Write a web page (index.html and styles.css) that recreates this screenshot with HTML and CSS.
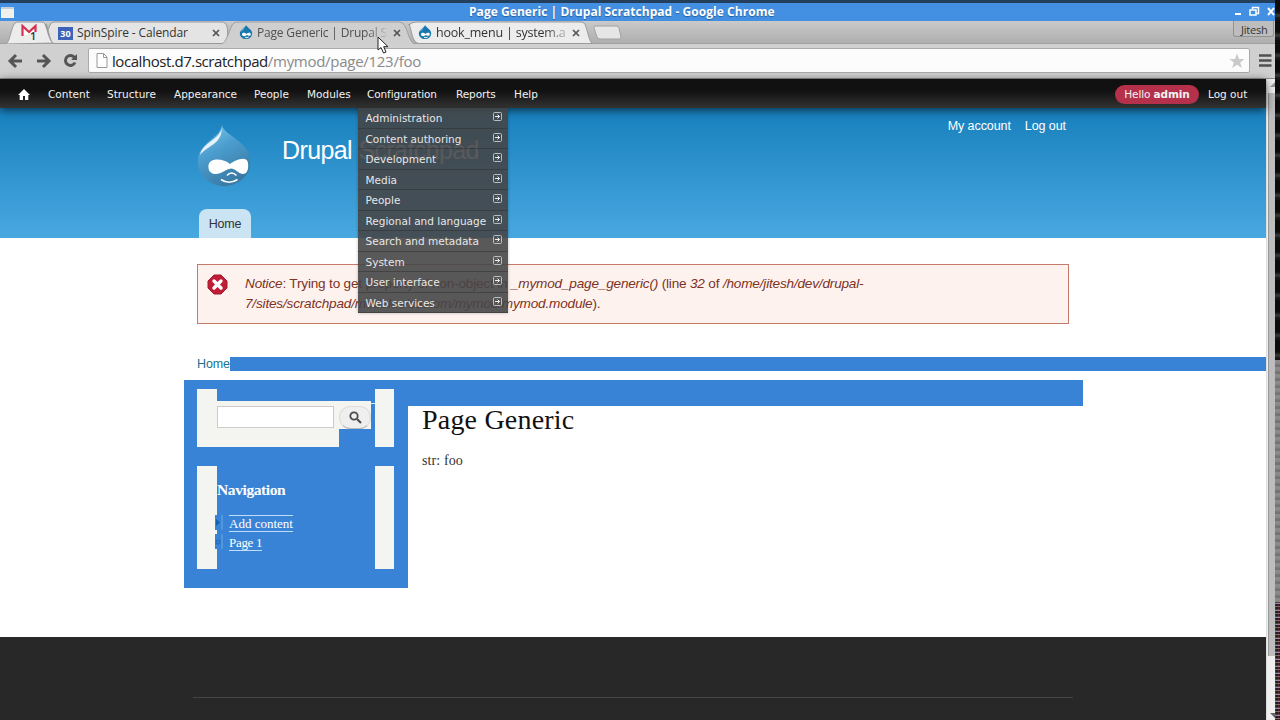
FILE: index.html
```
<!DOCTYPE html>
<html lang="en">
<head>
  <meta charset="UTF-8">
  <title>Page Generic | Drupal Scratchpad</title>
  <link rel="stylesheet" href="styles.css">
</head>
<body>
  <svg class="defs" width="0" height="0">
    <defs>
      <symbol id="drop" viewBox="0 0 14 14">
        <path d="M7 0C7.4 2.2 13.2 4 13.2 8.6A6 5.4 0 0 1 .8 8.6C.8 4.800 6 3.200 7 0Z" fill="#1878ad"/>
        <path d="M5.500 3C3.500 4 2 5.500 2 7C3.500 5 5 5 5.500 3Z" fill="#75bce0"/>
        <path d="M3 9.300C3.300 7.300 6 7.500 7.500 8.900C9 7.500 11.700 7.400 11.800 9.200C11.900 11 9.500 11.400 8 10.100C6.300 11.600 2.900 11.700 3 9.300Z" fill="#fff"/>
        <path d="M6 12.200Q7.800 13.400 9.600 12" stroke="#fff" fill="none"/>
      </symbol>
      <symbol id="more" viewBox="0 0 9 9">
        <rect x=".5" y=".5" width="8" height="8" rx="1" fill="none" stroke="#b9bec3"/>
        <path d="M2 4.500H6.500M4.500 2.500L6.500 4.500L4.500 6.500" fill="none" stroke="#eee"/>
      </symbol>
      <symbol id="close" viewBox="0 0 8 8">
        <path d="M1 1L7 7M7 1L1 7" stroke="#555" stroke-width="1.700"/>
      </symbol>
    </defs>
  </svg>

  <div class="desktop">
    <div class="window">
      <div class="titlebar">
        <span class="win-icon"></span>
        <span class="win-title">Page Generic | Drupal Scratchpad - Google Chrome</span>
        <svg class="win-buttons" width="41" height="18" viewBox="0 0 41 18">
          <path d="M1 11H7" stroke="#fff" stroke-width="2"/>
          <path d="M18.500 6V4.500H24.500V10.500H22" stroke="#fff" fill="none" stroke-width="1.500"/>
          <rect x="16" y="7" width="6" height="5" stroke="#fff" fill="none" stroke-width="1.500"/>
          <path d="M34 5L40 12M40 5L34 12" stroke="#fff" stroke-width="2"/>
        </svg>
      </div>

      <div class="tabstrip">
        <svg class="tab-shapes" width="640" height="23" viewBox="0 0 640 23">
          <path d="M6 23C10 21 11 6 15 2Q16 1 19 1H41Q44 1 45 3C48 10 49 21 54 22Z" fill="#ececec" stroke="#999"/>
          <path d="M46 3C49 10 50 22 54 22.500H225C228 20 229 5 225 2Q224 1 221 1H54Q51 1 50 4L48 9Z" fill="#e4e4e4" stroke="#999"/>
          <path d="M409 3C412 10 412 22 419 22.500H592C588 18 587 5 584 2Q583 1 580 1H416Q412 1 409 4Z" fill="#ececec" stroke="#999"/>
          <path d="M220 24C228 22 229 6 234 2Q235 1 238 1H399Q403 1 405 5C409 14 410 22 416 24Z" fill="#cfcfcf" stroke="#a0a0a0"/>
          <path d="M596 5H617Q618 5 619 7L621 16Q621 18 619 18H600Q598 18 597 16L594 7Q593 5 596 5Z" fill="#e6e6e6" stroke="#a2a2a2"/>
        </svg>
        <div class="tab tab-mail">
          <svg width="17" height="16" viewBox="0 0 17 16">
            <path d="M1.500 12V2L8 8L14.500 2V8" fill="#fff" stroke="#d5304f" stroke-width="2.200"/>
          </svg>
          <span class="unread">1</span>
        </div>
        <div class="tab tab-calendar">
          <span class="cal-icon">30</span>
          <span class="tab-label">SpinSpire - Calendar</span>
          <svg width="8" height="8"><use href="#close"/></svg>
        </div>
        <div class="tab tab-page">
          <svg width="14" height="14"><use href="#drop"/></svg>
          <span class="tab-label">Page Generic | Drupal S</span>
          <svg width="8" height="8"><use href="#close"/></svg>
        </div>
        <div class="tab tab-hook">
          <svg width="14" height="14"><use href="#drop"/></svg>
          <span class="tab-label">hook_menu | system.ap</span>
          <svg width="8" height="8"><use href="#close"/></svg>
        </div>
        <span class="profile">Jitesh</span>
      </div>

      <div class="toolbar">
        <svg width="84" height="20" viewBox="0 0 84 20" fill="none" stroke="#555" stroke-width="3">
          <path d="M22 10H11M16 4L10 10L16 16"/>
          <path d="M37 10H48M43 4L49 10L43 16"/>
          <path d="M74.500 6.500A5 5 0 1 0 75 11.500"/>
          <path d="M77 3V9H71Z" fill="#555" stroke="none"/>
        </svg>
        <div class="omnibox">
          <svg width="12" height="15" viewBox="0 0 12 15">
            <path d="M1 .5H7.500L11 4V14.500H1ZM7.500 .5V4.500H11" fill="#fff" stroke="#999"/>
          </svg>
          <span class="url">localhost.d7.scratchpad<span class="path">/mymod/page/123/foo</span></span>
          <svg width="16" height="16" viewBox="0 0 16 16">
            <path d="M8 .5L10 6H15.500L11.200 9.400L12.800 15L8 11.700L3.200 15L4.800 9.400L.5 6H6Z" fill="#c9c9c9"/>
          </svg>
        </div>
        <svg class="menu-icon" width="13" height="13" viewBox="0 0 13 13">
          <path d="M0 1.500H12.500M0 6.500H12.500M0 11.500H12.500" stroke="#505050" stroke-width="2.400"/>
        </svg>
      </div>

      <div class="viewport">
        <div class="page">
          <div class="admin-menu">
            <svg width="12" height="11" viewBox="0 0 12 11">
              <path d="M6 0L12 6H10.300V11H7V7H5V11H1.700V6H0Z" fill="#fff"/>
            </svg>
            <span class="am-content">Content</span>
            <span class="am-structure">Structure</span>
            <span class="am-appearance">Appearance</span>
            <span class="am-people">People</span>
            <span class="am-modules">Modules</span>
            <div class="am-config">Configuration
              <ul class="dropdown">
                <li>Administration<svg width="9" height="9"><use href="#more"/></svg></li>
                <li>Content authoring<svg width="9" height="9"><use href="#more"/></svg></li>
                <li>Development<svg width="9" height="9"><use href="#more"/></svg></li>
                <li>Media<svg width="9" height="9"><use href="#more"/></svg></li>
                <li>People<svg width="9" height="9"><use href="#more"/></svg></li>
                <li>Regional and language<svg width="9" height="9"><use href="#more"/></svg></li>
                <li>Search and metadata<svg width="9" height="9"><use href="#more"/></svg></li>
                <li>System<svg width="9" height="9"><use href="#more"/></svg></li>
                <li>User interface<svg width="9" height="9"><use href="#more"/></svg></li>
                <li>Web services<svg width="9" height="9"><use href="#more"/></svg></li>
              </ul>
            </div>
            <span class="am-reports">Reports</span>
            <span>Help</span>
            <span class="hello">Hello <b>admin</b></span>
            <span class="am-logout">Log out</span>
          </div>

          <div class="header">
            <div class="branding">
              <svg class="logo" width="55" height="62" viewBox="0 0 55 62">
                <defs>
                  <linearGradient id="body" x1="0" y1="0" x2="0.500" y2="1">
                    <stop offset="0" stop-color="#8fcdec"/>
                    <stop offset=".45" stop-color="#4c9fd0"/>
                    <stop offset="1" stop-color="#3a7ba6"/>
                  </linearGradient>
                </defs>
                <path d="M25 0C27 11 53.500 16 53.500 37A26.200 24 0 0 1 .8 37C.8 17 23 14 25 0Z" fill="url(#body)"/>
                <path d="M25 3C22 15 6 17 3 30C11 20 24 20 25 3Z" fill="#fff" opacity=".85"/>
                <path d="M11.500 43C10 32 26 33 33 39C38 35 50 30 51 38C52 46 49 49 46 49C42 49 38 43.500 34 43.500C29 44 24 49 19 49C15 49 12 47 11.500 43Z" fill="#fff"/>
                <path d="M30 50.500Q34.500 45.500 39.500 50.500M24 54.500Q32 60 40.500 54.500" fill="none" stroke="#fff" stroke-width="1.600"/>
              </svg>
              <h1>Drupal Scratchpad</h1>
              <div class="user-links"><span>My account</span><span>Log out</span></div>
            </div>
            <div class="main-tab">Home</div>
          </div>

          <div class="message">
            <svg width="22" height="22" viewBox="0 0 22 22">
              <path d="M7 1H14L20 7V14L14 20H7L1 14V7Z" fill="#c01e37" stroke="#a51a30"/>
              <path d="M7 7L14 14M14 7L7 14" stroke="#fff" stroke-width="3.400" stroke-linecap="round"/>
            </svg>
            <p><em>Notice</em>: Trying to get property of non-object in <em>_mymod_page_generic()</em> (line <em>32</em> of <em>/home/jitesh/dev/drupal-<br>7/sites/scratchpad/modules/custom/mymod/mymod.module</em>).</p>
          </div>

          <div class="breadcrumb"><span>Home</span><div class="fill"></div></div>

          <div class="main">
            <div class="sidebar">
              <div class="block search">
                <div class="search-body">
                  <div class="search-form">
                    <div class="input"></div>
                    <div class="search-button">
                      <svg width="13" height="13" viewBox="0 0 13 13" fill="none" stroke="#4c4c4c">
                        <circle cx="5" cy="5" r="3.700" stroke-width="1.800"/>
                        <path d="M8 8L12 12" stroke-width="2.200"/>
                      </svg>
                    </div>
                  </div>
                  <div class="search-foot"></div>
                </div>
                <div class="search-gap"></div>
              </div>
              <div class="block nav">
                <h2>Navigation</h2>
                <ul>
                  <li class="add"><svg width="8" height="15" viewBox="0 0 8 15"><path d="M0 0H6V15H0Z" fill="#3983d6"/><path d="M1 4L5 7.500L1 11Z" fill="#1262ad"/><path d="M7 0V15" stroke="#6ba9ea"/></svg><a>Add content</a></li>
                  <li><svg width="8" height="15" viewBox="0 0 8 15"><path d="M0 0H6V15H0Z" fill="#3983d6"/><circle cx="3" cy="8" r="2" fill="none" stroke="#1b68b8"/><path d="M7 0V15" stroke="#6ba9ea"/></svg><a>Page 1</a></li>
                </ul>
              </div>
            </div>
            <div class="content">
              <div class="content-top"></div>
              <h2>Page Generic</h2>
              <p>str: foo</p>
            </div>
          </div>

          <div class="footer"><div class="rule"></div></div>
        </div>

        <div class="scrollbar">
          <svg width="9" height="10" viewBox="0 0 9 10"><path d="M3 8L8 3V8Z" fill="#999"/></svg>
          <div class="thumb"></div>
          <svg width="9" height="10" viewBox="0 0 9 10"><path d="M3 3L8 8V3Z" fill="#666"/></svg>
        </div>
      </div>
    </div>
    <div class="screen-edge">
      <div class="edge-dark"></div>
      <div class="edge-gray"></div>
      <div class="edge-noise"></div>
    </div>
    <svg class="cursor" width="12" height="19" viewBox="0 0 12 19">
      <path d="M1 1V14L4 11.500L6.500 17L9 16L6.700 10.700H11Z" fill="#fff" stroke="#222"/>
    </svg>
  </div>
</body>
</html>
```
FILE: styles.css
```
* { box-sizing: border-box; margin: 0; padding: 0; }
body {
  width: 1280px; height: 720px; overflow: hidden;
  font-family: "Liberation Sans", Arial, sans-serif;
  background: #fff;
}
svg { display: block; flex: none; }
ul { list-style: none; }
.defs { display: none; }
.desktop { position: relative; display: flex; height: 720px; }
.window { width: 1275px; display: flex; flex-direction: column; border-top: 3px solid #243f5c; }

/* window title and tabs */
.titlebar {
  height: 18px; display: flex; align-items: center;
  background: #438fe1; color: #fff; font: bold 12px/18px "Open Sans", "Noto Sans", sans-serif;
}
.win-icon { width: 13px; height: 11px; margin: 1px 0 0 1px; background: #f2f0ea; border-top: 2px solid #c5d0d8; }
.win-title { margin-left: 455px; letter-spacing: .05px; text-shadow: 0 1px 1px #26609f; white-space: nowrap; }
.win-buttons { margin-left: auto; }
.tabstrip {
  position: relative; height: 23px; display: flex; align-items: center;
  background: linear-gradient(#cacaca, #aeaeae); border-bottom: 1px solid #a0a0a0;
  font: 12px/22px "Open Sans", "Noto Sans", sans-serif; color: #333;
}
.tab-shapes { position: absolute; left: 0; top: 0; }
.tab { position: relative; height: 22px; display: flex; align-items: center; }
.tab-label { white-space: nowrap; padding-top: 1px; }
.tab svg + .tab-label + svg, .tab-calendar svg { margin-top: 1px; }
.tab-mail { width: 58px; padding-left: 21px; }
.unread { margin: 7px 0 0 -8px; font-size: 11px; font-weight: 600; }
.tab-calendar { width: 181px; }
.tab-calendar .tab-label { width: 135px; letter-spacing: -.12px; }
.cal-icon { width: 15px; height: 13px; margin: 2px 4px 0 0; background: #3d62b8; color: #fff; font-size: 9px; font-weight: bold; line-height: 13px; text-align: center; }
.tab-page { width: 179px; }
.tab-page .tab-label { width: 129px; margin: 0 7px 0 4px; letter-spacing: -.18px; color: #505050; -webkit-mask: linear-gradient(90deg, #000 110px, transparent 132px); }
.tab-hook .tab-label { width: 130px; margin: 0 6px 0 4px; font-size: 12.500px; letter-spacing: -.2px; -webkit-mask: linear-gradient(90deg, #000 108px, transparent 138px); }
.profile {
  width: 41px; height: 16px; margin: -6px 1px 0 auto; padding-left: 7px;
  border: 1px solid #929292; border-top: 0; border-radius: 0 0 3px 3px;
  background: #bdbdbd; font-size: 11px; line-height: 18px; letter-spacing: -.2px;
}
.toolbar {
  height: 35px; display: flex; align-items: center; padding-bottom: 1px;
  background: #d0d0d0; border-bottom: 1px solid #919191;
}
.omnibox {
  width: 1162px; height: 25px; margin-left: 4px; padding: 0 4px 0 7px;
  display: flex; align-items: center; background: #fcfcfc; border: 1px solid #aaa; border-radius: 2px;
}
.url { flex: 1; margin-left: 4px; font: 15px/22px "Open Sans", "Noto Sans", sans-serif; letter-spacing: -.43px; color: #222; }
.path { color: #8a8a8a; letter-spacing: -.28px; }
.menu-icon { margin-left: 9px; }

/* admin menu */
.viewport { flex: 1; display: flex; min-height: 0; }
.page { width: 1266px; display: flex; flex-direction: column; background: #fff; }
.admin-menu {
  position: relative; z-index: 2; height: 29px; flex: none; display: flex; align-items: center; padding: 1px 19px 0 18px;
  background: linear-gradient(#101010, #111 40%, #333); color: #f2f2f2;
  font: 10.500px/20px "DejaVu Sans", Verdana, sans-serif;
  box-shadow: 0 2px 9px rgba(0, 0, 0, .65);
}
.am-content { width: 59px; margin-left: 18px; }
.am-structure { width: 67px; }
.am-appearance { width: 80px; }
.am-people { width: 53px; }
.am-modules { width: 60px; }
.am-config { width: 89px; letter-spacing: -.1px; }
.am-reports { width: 58px; letter-spacing: -.1px; }
.hello { width: 84px; margin-left: auto; height: 19px; line-height: 19px; border-radius: 10px; background: #b5304a; text-align: center; letter-spacing: -.1px; }
.am-logout { width: 39px; margin-left: 9px; white-space: nowrap; }
.dropdown {
  position: absolute; left: 358px; top: 29px; width: 150px; height: 205px;
  display: grid; grid-template-rows: repeat(10, 1fr);
  background: rgba(68, 68, 70, .89); box-shadow: 0 0 3px rgba(0, 0, 0, .25);
}
.dropdown li {
  display: flex; align-items: center; justify-content: space-between; padding: 1px 6px 0 7.500px;
  border-bottom: 1px solid rgba(45, 45, 48, .5); color: #e7e7e7; line-height: 18px; letter-spacing: 0;
}
.dropdown svg { margin-bottom: 3px; }

/* site header */
.header {
  height: 130px; flex: none; display: flex; flex-direction: column; justify-content: space-between;
  padding: 10px 200px 0 197px; background: linear-gradient(#1780bd, #49a8e0);
}
.branding { display: flex; align-items: flex-start; }
.logo { margin-top: 7px; }
h1 { margin: 17px 0 0 30px; font-size: 25px; font-weight: normal; line-height: 30px; letter-spacing: -.6px; color: #fff; }
.user-links { display: flex; gap: 14px; margin-left: auto; color: #fff; font-size: 12.500px; line-height: 16px; letter-spacing: -.08px; }
.main-tab { width: 52px; height: 29px; margin-left: 2px; border-radius: 8px 8px 0 0; background: #cae4f3; color: #333; font-size: 12.500px; letter-spacing: -.2px; line-height: 30px; text-align: center; }

/* page body */
.message {
  width: 872px; height: 60px; flex: none; display: flex; margin: 26px 0 0 197px; padding: 9px;
  background: #fdf2ed; border: 1px solid #c4796b; color: #7d3326;
}
.message p { margin-left: 16px; font-size: 13.600px; line-height: 20px; letter-spacing: -.19px; white-space: nowrap; }
.breadcrumb { height: 14px; flex: none; display: flex; margin: 33px 0 9px 197px; color: #20718f; font-size: 12.500px; line-height: 15px; letter-spacing: -.1px; }
.breadcrumb span { width: 33px; }
.fill { flex: 1; background: #3983d6; }
.main { width: 899px; height: 257px; flex: none; display: flex; align-items: flex-start; margin-left: 184px; font-family: "Liberation Serif", Georgia, serif; }
.sidebar { width: 224px; height: 208px; padding: 9px 14px 0 13px; background: #3983d6; }
.block { border: solid #f4f4f0; border-width: 0 19px 0 20px; }
.search { height: 58px; display: flex; margin-bottom: 19px; }
.search-body { width: 154px; padding-top: 12px; }
.search-form { height: 28px; display: flex; gap: 5px; padding-top: 5px; background: #f4f4f0; }
.input { width: 117px; height: 22px; background: #fff; border: 1px solid #ccc; }
.search-button { width: 32px; height: 23px; display: flex; align-items: center; justify-content: center; border: 1px solid #ddd; border-bottom-color: #bbb; border-radius: 12px; background: #efefef; }
.search-foot { width: 122px; height: 18px; background: #f4f4f0; }
.search-gap { width: 4px; height: 1px; margin-top: 14px; background: #d7eaff; }
.nav { height: 103px; padding-top: 14px; color: #fff; }
.nav h2 { font-size: 15.500px; line-height: 20px; letter-spacing: -.4px; }
.nav ul { margin-top: 15px; }
.nav li { height: 19px; display: flex; align-items: flex-start; font-size: 13px; line-height: 15px; }
.nav li svg { margin: 0 4px 0 -2px; }
.nav li a { margin-left: 2px; border-bottom: 1px solid #c2ddfa; }
.nav .add a { border-top: 1px solid #c2ddfa; }
.nav li + li a { padding-top: 1px; letter-spacing: -.3px; }
.content { flex: 1; }
.content-top { height: 26px; background: #3983d6; }
.content h2 { margin-left: 14px; font-size: 28px; font-weight: normal; line-height: 28px; letter-spacing: .2px; color: #111; }
.content p { margin: 19px 0 0 14px; font-size: 14px; line-height: 16px; letter-spacing: .1px; color: #333; }
.footer { flex: 1; padding: 60px 193px 0; background: #282828; }
.rule { height: 1px; background: #444; }

/* scrollbar and right edge */
.scrollbar { width: 9px; display: flex; flex-direction: column; background: #efefef; border-left: 1px solid #ddd; }
.thumb { height: 563px; margin: 4px 0 auto 1px; background: #bdbdbd; border-left: 1px solid #999; }
.screen-edge { width: 5px; display: flex; flex-direction: column; }
.edge-dark { height: 360px; background: repeating-linear-gradient(#0c0c0c 0 12px, #353535 15px 16px, #161616 18px 20px); }
.edge-gray { height: 242px; background: repeating-linear-gradient(#8a8a8a 0 3px, #737373 5px 7px); }
.edge-noise {
  flex: 1;
  background:
    repeating-linear-gradient(90deg, rgba(190, 60, 110, .35) 0 1px, transparent 1px 3px),
    repeating-linear-gradient(#31503c 0 1px, #97909f 1px 2px, #1c1a2a 2px 4px, #6f7b52 4px 5px, #202020 5px 7px);
}
.cursor { position: absolute; left: 377px; top: 36px; }
```
